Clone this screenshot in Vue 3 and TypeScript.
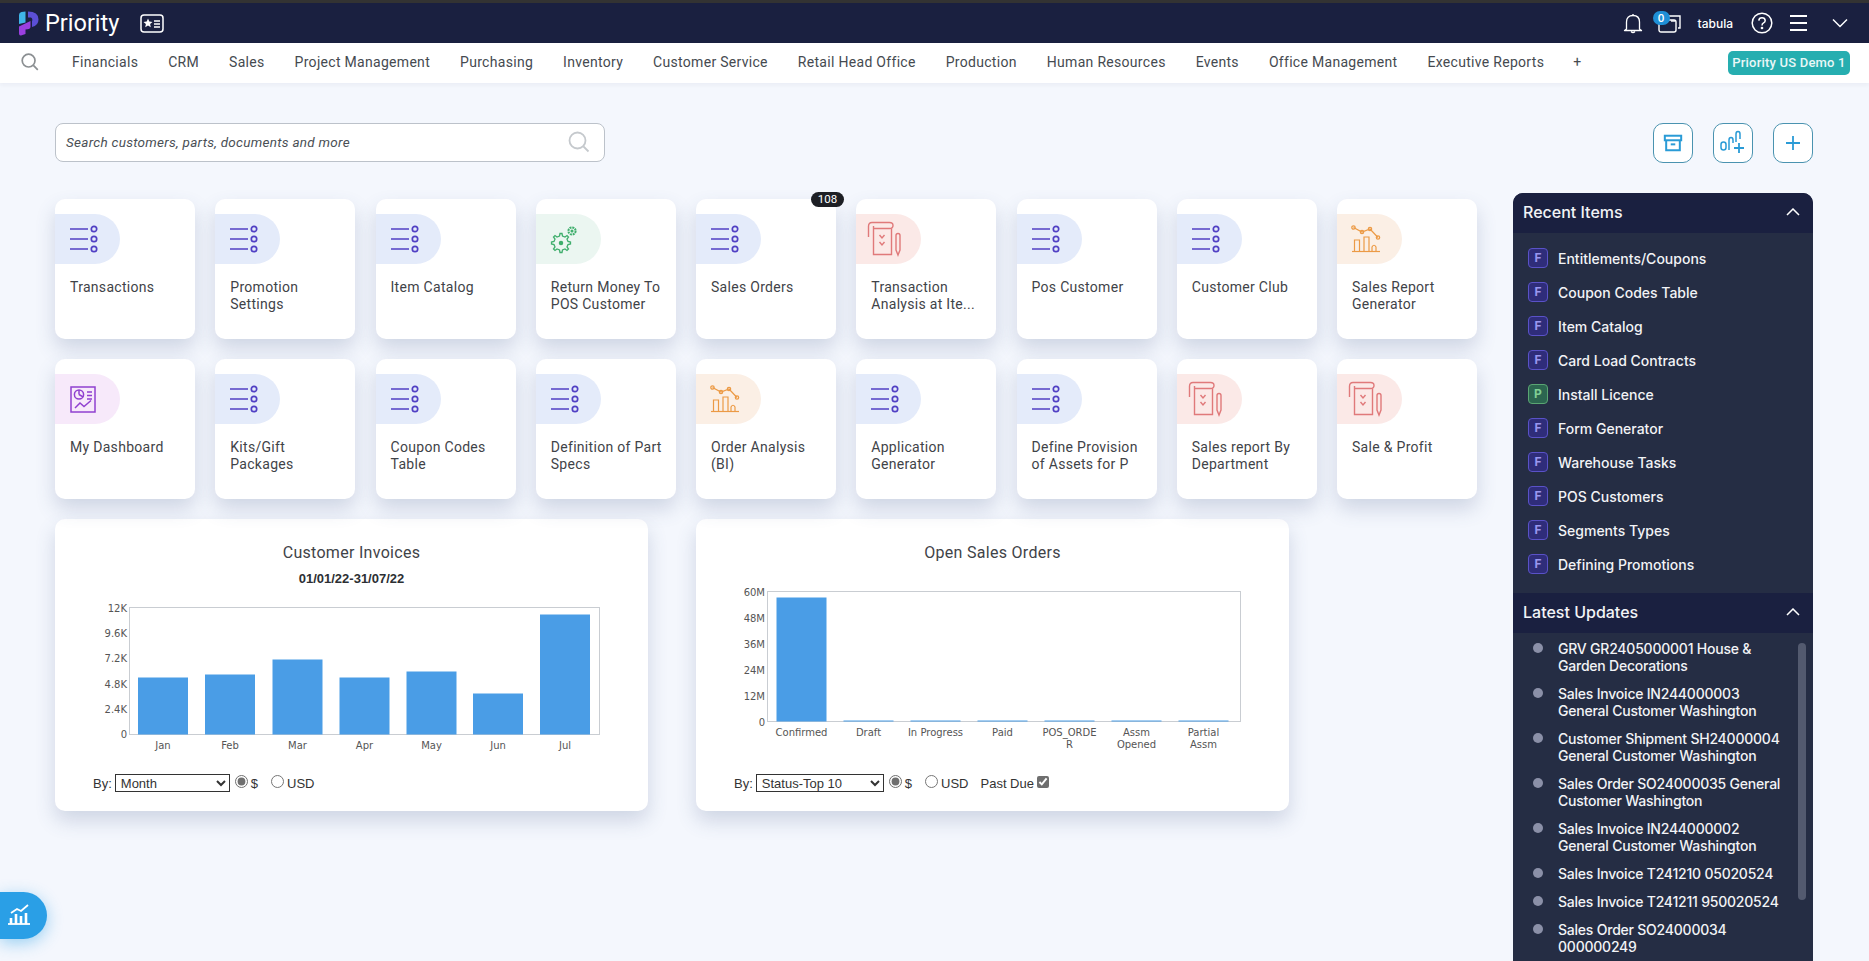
<script setup lang="ts">
type Kind = 'list' | 'gears' | 'report' | 'bars' | 'dash'

interface Tile {
  label: string
  kind: Kind
  badge?: string
}

const tiles: Tile[] = [
  { label: 'Transactions', kind: 'list' },
  { label: 'Promotion Settings', kind: 'list' },
  { label: 'Item Catalog', kind: 'list' },
  { label: 'Return Money To POS Customer', kind: 'gears' },
  { label: 'Sales Orders', kind: 'list', badge: '108' },
  { label: 'Transaction Analysis at Ite...', kind: 'report' },
  { label: 'Pos Customer', kind: 'list' },
  { label: 'Customer Club', kind: 'list' },
  { label: 'Sales Report Generator', kind: 'bars' },
  { label: 'My Dashboard', kind: 'dash' },
  { label: 'Kits/Gift Packages', kind: 'list' },
  { label: 'Coupon Codes Table', kind: 'list' },
  { label: 'Definition of Part Specs', kind: 'list' },
  { label: 'Order Analysis (BI)', kind: 'bars' },
  { label: 'Application Generator', kind: 'list' },
  { label: 'Define Provision of Assets for P', kind: 'list' },
  { label: 'Sales report By Department', kind: 'report' },
  { label: 'Sale & Profit', kind: 'report' },
]

const navItems = [
  'Financials', 'CRM', 'Sales', 'Project Management', 'Purchasing', 'Inventory', 'Customer Service',
  'Retail Head Office', 'Production', 'Human Resources', 'Events', 'Office Management', 'Executive Reports',
]

const recentItems = [
  { tag: 'F', name: 'Entitlements/Coupons' },
  { tag: 'F', name: 'Coupon Codes Table' },
  { tag: 'F', name: 'Item Catalog' },
  { tag: 'F', name: 'Card Load Contracts' },
  { tag: 'P', name: 'Install Licence' },
  { tag: 'F', name: 'Form Generator' },
  { tag: 'F', name: 'Warehouse Tasks' },
  { tag: 'F', name: 'POS Customers' },
  { tag: 'F', name: 'Segments Types' },
  { tag: 'F', name: 'Defining Promotions' },
]

const updates = [
  'GRV GR2405000001 House & Garden Decorations',
  'Sales Invoice IN244000003 General Customer Washington',
  'Customer Shipment SH24000004 General Customer Washington',
  'Sales Order SO24000035 General Customer Washington',
  'Sales Invoice IN244000002 General Customer Washington',
  'Sales Invoice T241210 05020524',
  'Sales Invoice T241211 950020524',
  'Sales Order SO24000034 000000249',
]

// chart 1, plot is 470 x 127
const invoiceBars = [
  { label: 'Jan', x: 8.5, top: 70 },
  { label: 'Feb', x: 75.5, top: 67 },
  { label: 'Mar', x: 143, top: 52 },
  { label: 'Apr', x: 210, top: 70 },
  { label: 'May', x: 277, top: 64 },
  { label: 'Jun', x: 343.5, top: 86 },
  { label: 'Jul', x: 410.5, top: 7 },
]
const invoiceTicks = ['12K', '9.6K', '7.2K', '4.8K', '2.4K', '0']

// chart 2, plot is 473 x 130
const orderBars = [
  { lines: ['Confirmed'], x: 9, top: 6 },
  { lines: ['Draft'], x: 76, top: 129 },
  { lines: ['In Progress'], x: 143, top: 129 },
  { lines: ['Paid'], x: 210, top: 129 },
  { lines: ['POS_ORDE', 'R'], x: 277, top: 129 },
  { lines: ['Assm', 'Opened'], x: 344, top: 129 },
  { lines: ['Partial', 'Assm'], x: 411, top: 129 },
]
const orderTicks = ['60M', '48M', '36M', '24M', '12M', '0']
</script>

<template>
  <div class="page">
    <header class="topbar">
      <div class="brand">
        <svg class="logo" width="21" height="25" viewBox="0 0 21 25">
          <path d="M1 4Q1 1.5 3.5 1L7.5 .5V11.5L1 13Z" fill="#3fb4e8" />
          <path d="M10 .5Q20.5 .5 20.5 8.5Q20.5 14.5 14 16V10.5Q15 7.5 13 6.5L10 6.5Z" fill="#5b4fd6" />
          <path d="M1 15.5L12.5 10V15.5Q12.5 18.2 9.5 18.2L7.5 18.5V23L3 24.5Q1 24.8 1 22.5Z" fill="#9a3fe0" />
        </svg>
        <span class="brand-name">Priority</span>
        <svg class="idcard" width="24" height="19" viewBox="0 0 24 19" fill="none">
          <rect x="1" y="1" width="22" height="17" rx="3" stroke="#fff" stroke-width="1.5" />
          <path d="M8 4.5L9.3 7.6L12.5 7.9L10.1 10L10.8 13.2L8 11.5L5.2 13.2L5.9 10L3.5 7.9L6.7 7.6Z" fill="#fff" />
          <path d="M14 7H20M14 10H20M14 13H20" stroke="#fff" stroke-width="1.4" />
        </svg>
      </div>
      <div class="top-right">
        <svg class="bell" width="20" height="21" viewBox="0 0 20 21" fill="none" stroke="#fff" stroke-width="1.3">
          <path d="M3.5 16V9Q3.5 2.5 10 2.5T16.5 9V16L18.5 17.5H1.5Z" stroke-linejoin="round" />
          <path d="M8 18.5Q10 20.5 12 18.5" />
          <path d="M10 1V2.5" />
        </svg>
        <div class="windows">
          <svg width="24" height="20" viewBox="0 0 24 20" fill="none" stroke="#fff" stroke-width="1.4">
            <rect x="1" y="7" width="17" height="12" rx="2" />
            <path d="M7 3H22V15H20" />
            <path d="M13 8H17" />
          </svg>
          <span class="win-badge">0</span>
        </div>
        <span class="user">tabula</span>
        <svg class="help" width="22" height="22" viewBox="0 0 22 22" fill="none" stroke="#fff" stroke-width="1.5">
          <circle cx="11" cy="11" r="9.8" />
          <path d="M7.8 8.6Q8 5.8 11 5.8T14.2 8.5Q14.2 10 12.6 10.9T11 13.4" />
          <circle cx="11" cy="16" r=".6" fill="#fff" />
        </svg>
        <div class="burger"><i></i><i></i><i></i></div>
        <svg class="top-chev" width="16" height="10" viewBox="0 0 16 10" fill="none" stroke="#fff" stroke-width="1.5">
          <path d="M1 1.5L8 8.5L15 1.5" />
        </svg>
      </div>
    </header>

    <nav class="navbar">
      <svg class="nav-search" width="18" height="18" viewBox="0 0 18 18" fill="none" stroke="#8b8f92" stroke-width="1.7">
        <circle cx="7.6" cy="7.6" r="6.4" />
        <path d="M12.4 12.4L16.8 16.8" />
      </svg>
      <ul class="nav-list">
        <li v-for="item in navItems" :key="item">{{ item }}</li>
        <li class="nav-plus">+</li>
      </ul>
      <span class="company">Priority US Demo 1</span>
    </nav>

    <div class="content">
      <main class="main">
        <div class="search-row">
          <div class="search-box">
            <span>Search customers, parts, documents and more</span>
            <svg width="22" height="22" viewBox="0 0 22 22" fill="none" stroke="#c5c9cd" stroke-width="1.8">
              <circle cx="9.5" cy="9.5" r="8" />
              <path d="M15.5 15.5L20.5 20.5" />
            </svg>
          </div>
          <div class="actions">
            <button class="act-btn">
              <svg width="20" height="20" viewBox="0 0 22 22" fill="none" stroke="#2a9bd6" stroke-width="2.2">
                <rect x="2" y="3" width="18" height="5" />
                <path d="M3.5 8V19H18.5V8" />
                <path d="M8.5 12.5H13.5" />
              </svg>
            </button>
            <button class="act-btn">
              <svg width="28" height="28" viewBox="0 0 28 28" fill="none" stroke="#2a9bd6" stroke-width="1.5">
                <rect x="2" y="13" width="5" height="8" rx="2.5" />
                <path d="M10 21V11Q10 8.5 12 8.5T14 11V14" />
                <path d="M17 13V5Q17 2.5 19 2.5T21 5V10" />
                <path d="M20 14V24M15 19H25" stroke-width="1.8" />
              </svg>
            </button>
            <button class="act-btn">
              <svg width="18" height="18" viewBox="0 0 18 18" fill="none" stroke="#2a9bd6" stroke-width="1.8">
                <path d="M9 2V16M2 9H16" />
              </svg>
            </button>
          </div>
        </div>

        <div class="tiles">
          <div v-for="tile in tiles" :key="tile.label" class="tile">
            <span v-if="tile.badge" class="tile-badge">{{ tile.badge }}</span>
            <div class="pill" :class="'pill-' + tile.kind">
              <svg v-if="tile.kind === 'list'" width="30" height="28" viewBox="0 0 30 28" fill="none" stroke="#5140c4" stroke-width="1.7">
                <path d="M1 4H19M1 14H19M1 24H19" />
                <circle cx="25" cy="4" r="2.7" />
                <circle cx="25" cy="14" r="2.7" />
                <circle cx="25" cy="24" r="2.7" />
              </svg>
              <svg v-else-if="tile.kind === 'gears'" width="28" height="34" viewBox="0 0 28 34" fill="none" stroke="#3fae6c" stroke-width="1.3">
                <g transform="translate(-1 1.5)">
                  <path d="M11 10L13 10L13.5 12.5L16 13.5L18 12L19.5 13.5L18 15.5L19 18L21.5 18.5V20.5L19 21L18 23.5L19.5 25.5L18 27L16 25.5L13.5 26.5L13 29H11L10.5 26.5L8 25.5L6 27L4.5 25.5L6 23.5L5 21L2.5 20.5V18.5L5 18L6 15.5L4.5 13.5L6 12L8 13.5L10.5 12.5Z" />
                  <circle cx="12" cy="19.5" r="1.6" fill="#3fae6c" />
                </g>
                <circle cx="22" cy="9" r="3.6" stroke-dasharray="2 .8" stroke-width="2" />
                <circle cx="22" cy="9" r=".9" fill="#3fae6c" />
              </svg>
              <svg v-else-if="tile.kind === 'report'" width="35" height="36" viewBox="0 0 35 36" fill="none" stroke="#e0797a" stroke-width="1.4">
                <path d="M1.5 16V5.5Q1.5 1.5 5 1.5H22.5Q26 1.5 26 4.5T22.5 7.5H7" />
                <path d="M6.5 5V33.5H24.5V7.5" />
                <path d="M12.5 14L15 17L17.5 14M12.5 21L15 24L17.5 21" />
                <path d="M29 14.5Q29 12.5 31 12.5T33 14.5V29L31 34L29 29Z" />
              </svg>
              <svg v-else-if="tile.kind === 'bars'" width="30" height="28" viewBox="0 0 30 28" fill="none" stroke="#ec9a45" stroke-width="1.2">
                <path d="M1 26.5H29" />
                <path d="M3.5 26.5V15H8.5V26.5M13 26.5V12H18V26.5M21 26.5V22Q23 18.5 25 22V26.5" />
                <path d="M2.5 2.5L11 7L19 4L27 12.5" />
                <circle cx="2.5" cy="2.5" r="1.7" />
                <circle cx="11" cy="7" r="1.7" />
                <circle cx="19" cy="4" r="1.7" />
                <circle cx="27" cy="12.5" r="1.7" />
              </svg>
              <svg v-else width="26" height="27" viewBox="0 0 26 27" fill="none" stroke="#9040d0" stroke-width="1.5">
                <rect x="1" y="1" width="24" height="25" />
                <circle cx="9" cy="8.5" r="4.6" />
                <path d="M9 8.5V3.9M9 8.5L13 10.8" />
                <path d="M17 6H22M17 9.5H22M17 13H22" />
                <path d="M5 22L10 17L14 20.5L21 14.5" />
              </svg>
            </div>
            <p class="tile-label">{{ tile.label }}</p>
          </div>
        </div>

        <div class="charts">
          <section class="chart-card">
            <h3 class="chart-title">Customer Invoices</h3>
            <div class="chart-date">01/01/22-31/07/22</div>
            <svg class="plot plot-a" width="540" height="175" viewBox="0 0 540 175">
              <g class="ticks" text-anchor="end">
                <text v-for="(t, i) in invoiceTicks" :key="t" x="58" :y="13 + i * 25.2">{{ t }}</text>
              </g>
              <g transform="translate(60.5 8.5)">
                <rect width="470" height="127" fill="none" stroke="#c9cdd2" />
                <rect v-for="b in invoiceBars" :key="b.label" :x="b.x" :y="b.top" width="50" :height="127 - b.top" fill="#4a9de6" />
                <text v-for="b in invoiceBars" :key="b.label + 'x'" class="x-label" :x="b.x + 25" y="141" text-anchor="middle">{{ b.label }}</text>
              </g>
            </svg>
            <div class="controls">
              <span>By:</span>
              <select class="by-select sel-a"><option>Month</option></select>
              <input type="radio" name="cur-a" checked />
              <span class="cur">$</span>
              <input type="radio" name="cur-a" class="radio-usd" />
              <span>USD</span>
            </div>
          </section>

          <section class="chart-card">
            <h3 class="chart-title">Open Sales Orders</h3>
            <svg class="plot plot-b" width="540" height="191" viewBox="0 0 540 191">
              <g class="ticks" text-anchor="end">
                <text v-for="(t, i) in orderTicks" :key="t" x="58" :y="13 + i * 25.9">{{ t }}</text>
              </g>
              <g transform="translate(60.5 8.5)">
                <rect width="473" height="130" fill="none" stroke="#c9cdd2" />
                <rect v-for="b in orderBars" :key="b.x" :x="b.x" :y="b.top" width="50" :height="130 - b.top" fill="#4a9de6" />
                <text v-for="b in orderBars" :key="b.x + 'x'" class="x-label" text-anchor="middle">
                  <tspan v-for="(line, i) in b.lines" :key="line" :x="b.x + 25" :y="144 + i * 12">{{ line }}</tspan>
                </text>
              </g>
            </svg>
            <div class="controls">
              <span>By:</span>
              <select class="by-select sel-b"><option>Status-Top 10</option></select>
              <input type="radio" name="cur-b" checked />
              <span class="cur">$</span>
              <input type="radio" name="cur-b" class="radio-usd" />
              <span>USD</span>
              <span class="past-due">Past Due</span>
              <input type="checkbox" checked />
            </div>
          </section>
        </div>
      </main>

      <aside class="sidebar">
        <div class="side-head">
          <span>Recent Items</span>
          <svg width="14" height="8" viewBox="0 0 14 8" fill="none" stroke="#fff" stroke-width="1.5"><path d="M1 7L7 1L13 7" /></svg>
        </div>
        <ul class="recent">
          <li v-for="r in recentItems" :key="r.name">
            <span class="tag" :class="{ 'tag-p': r.tag === 'P' }">{{ r.tag }}</span>
            {{ r.name }}
          </li>
        </ul>
        <div class="side-head">
          <span>Latest Updates</span>
          <svg width="14" height="8" viewBox="0 0 14 8" fill="none" stroke="#fff" stroke-width="1.5"><path d="M1 7L7 1L13 7" /></svg>
        </div>
        <div class="updates-wrap">
          <ul class="updates">
            <li v-for="u in updates" :key="u">
              <span class="dot"></span>
              <span class="upd-text">{{ u }}</span>
            </li>
          </ul>
          <div class="scrollbar"></div>
        </div>
      </aside>
    </div>

    <button class="float-btn">
      <svg width="22" height="21" viewBox="0 0 22 21" fill="none" stroke="#fff" stroke-width="1.8">
        <path d="M0 20H22" />
        <path d="M3 20V14M8 20V10M13 20V12M18 20V9" stroke-width="2.6" />
        <path d="M3 9L9 5L13 7L20 1" />
      </svg>
    </button>
  </div>
</template>

<style>
html,
body {
  margin: 0;
  height: 100%;
  overflow: hidden;
}
</style>

<style scoped>
.page {
  height: 961px;
  background: #f4f7fd;
  font-family: Roboto, "Liberation Sans", sans-serif;
  position: relative;
  overflow: hidden;
  border-top: 3px solid #333;
  box-sizing: border-box;
}

/* top bar */
.topbar {
  height: 40px;
  background: #1a2040;
  display: flex;
  align-items: center;
  justify-content: space-between;
  color: #fff;
}
.brand {
  display: flex;
  align-items: center;
  padding-left: 18px;
}
.brand-name {
  font-size: 23.5px;
  font-weight: 400;
  margin-left: 6px;
}
.idcard {
  margin-left: 21px;
}
.top-right {
  display: flex;
  align-items: center;
  padding-right: 21px;
}
.windows {
  position: relative;
  margin-left: 15px;
  height: 20px;
  width: 24px;
}
.win-badge {
  position: absolute;
  left: -5px;
  top: -2px;
  width: 17px;
  height: 14px;
  border-radius: 7px;
  background: #1f8fd6;
  font: 600 10px Inter, sans-serif;
  line-height: 14px;
  text-align: center;
}
.user {
  margin-left: 16px;
  font: 500 12px Inter, sans-serif;
}
.help {
  margin-left: 18px;
}
.burger {
  margin-left: 17px;
  display: flex;
  flex-direction: column;
  gap: 5px;
  width: 17px;
}
.burger i {
  height: 2px;
  background: #fff;
}
.top-chev {
  margin-left: 25px;
}

/* module nav */
.navbar {
  height: 40px;
  background: #fff;
  display: flex;
  align-items: center;
  padding: 0 0 2px 21px;
  box-sizing: border-box;
  box-shadow: 0 2px 4px rgba(30, 40, 80, .05);
  position: relative;
}
.nav-list {
  list-style: none;
  display: flex;
  margin: 0 0 0 33px;
  padding: 0;
  gap: 30px;
  font-size: 14px;
  letter-spacing: .3px;
  color: #454a50;
}
.nav-plus {
  margin-left: -1px;
}
.company {
  position: absolute;
  left: 1728px;
  top: 8px;
  width: 122px;
  height: 24px;
  line-height: 24px;
  background: #26aeb0;
  border-radius: 5px;
  color: #e9f7f7;
  font-size: 13px;
  font-weight: 500;
  text-align: center;
  letter-spacing: .2px;
}

.content {
  display: flex;
  height: 878px;
}
.main {
  width: 1513px;
  flex-shrink: 0;
  box-sizing: border-box;
  padding: 40px 0 0 55px;
}

/* search + actions */
.search-row {
  display: flex;
  justify-content: space-between;
  height: 40px;
  width: 1758px;
}
.search-box {
  width: 550px;
  height: 39px;
  box-sizing: border-box;
  background: #fff;
  border: 1px solid #bcc2ca;
  border-radius: 8px;
  display: flex;
  align-items: center;
  justify-content: space-between;
  padding: 0 14px 1px 10px;
  font-size: 13.5px;
  font-style: italic;
  color: #4a4f55;
  letter-spacing: .28px;
}
.actions {
  display: flex;
  gap: 20px;
}
.act-btn {
  width: 40px;
  height: 40px;
  padding: 0;
  display: flex;
  align-items: center;
  justify-content: center;
  background: #fff;
  border: 1px solid #4a93b0;
  border-radius: 10px;
}

/* tiles */
.tiles {
  display: grid;
  grid-template-columns: repeat(9, 140px);
  column-gap: 20.25px;
  row-gap: 20px;
  margin-top: 36px;
}
.tile {
  position: relative;
  height: 140px;
  background: #fff;
  border-radius: 10px;
  box-shadow: 0 10px 20px rgba(60, 80, 130, .2);
}
.tile-badge {
  position: absolute;
  left: 115px;
  top: -7px;
  width: 33px;
  height: 15px;
  border-radius: 8px;
  background: #1d1f24;
  color: #fff;
  font-size: 11.5px;
  line-height: 15px;
  text-align: center;
}
.pill {
  position: absolute;
  left: 0;
  top: 15px;
  width: 65px;
  height: 50px;
  border-radius: 0 25px 25px 0;
  display: flex;
  align-items: center;
  padding-left: 14px;
  box-sizing: border-box;
}
.pill-list {
  background: #e4ebfa;
}
.pill-gears {
  background: #ebf6f1;
}
.pill-report {
  background: #fbe9e7;
  padding-left: 11px;
}
.pill-bars {
  background: #fbefe5;
}
.pill-dash {
  background: #f7e9fa;
  padding-left: 15px;
}
.tile-label {
  margin: 0;
  position: absolute;
  left: 15px;
  top: 80px;
  width: 118px;
  font-size: 14px;
  line-height: 17px;
  letter-spacing: .3px;
  color: #3f4348;
}

/* charts */
.charts {
  display: flex;
  gap: 48px;
  margin-top: 20px;
}
.chart-card {
  width: 593px;
  height: 292px;
  background: #fff;
  border-radius: 10px;
  box-shadow: 0 10px 20px rgba(60, 80, 130, .2);
  box-sizing: border-box;
  padding-top: 24px;
}
.chart-title {
  margin: 0;
  text-align: center;
  font-size: 16px;
  font-weight: 400;
  line-height: 20px;
  letter-spacing: .3px;
  color: #3f4348;
}
.chart-date {
  margin-top: 8px;
  height: 15px;
  text-align: center;
  font: 700 13px/15px "Liberation Sans", sans-serif;
  color: #2c2f33;
}
.plot {
  display: block;
}
.plot-a {
  margin: 13px 0 0 14px;
}
.plot-b {
  margin: 20px 0 0 11px;
}
.ticks {
  font: 10px "DejaVu Sans", sans-serif;
  fill: #555;
}
.x-label {
  font: 10px "DejaVu Sans", sans-serif;
  fill: #555;
}
.controls {
  display: flex;
  align-items: center;
  font: 13px "Liberation Sans", sans-serif;
  color: #333;
  padding-left: 38px;
  height: 18px;
}
.by-select {
  margin-left: 3px;
  height: 18px;
  padding: 0 0 0 1px;
  font: 13px "Liberation Sans", sans-serif;
  border: 1px solid #333;
  background: #fff;
  color: #333;
}
.sel-a {
  width: 115px;
}
.sel-b {
  width: 128px;
}
.controls input {
  accent-color: #6f6f6f;
}
.controls input[type="radio"] {
  margin: 0 0 3px 5px;
  width: 13px;
  height: 13px;
}
.cur {
  margin-left: 3px;
}
.controls input.radio-usd {
  margin-left: 13px;
}
.radio-usd + span {
  margin-left: 3px;
}
.past-due {
  margin-left: 12px;
}
.controls input[type="checkbox"] {
  margin: 0 0 3px 3px;
  width: 12px;
  height: 12px;
}

/* sidebar */
.sidebar {
  width: 300px;
  margin-top: 110px;
  background: #252d44;
  border-radius: 10px 10px 0 0;
  color: #f2f3f6;
  font-family: Inter, sans-serif;
  font-size: 14px;
  overflow: hidden;
}
.side-head {
  height: 40px;
  background: #1a2040;
  display: flex;
  align-items: center;
  justify-content: space-between;
  padding: 0 13px 2px 10px;
  box-sizing: border-box;
  font-size: 16px;
  font-weight: 500;
}
.recent {
  list-style: none;
  margin: 0;
  padding: 8px 0 12px 15px;
}
.recent li {
  height: 34px;
  display: flex;
  align-items: center;
  font-weight: 500;
}
.tag {
  width: 20px;
  height: 20px;
  margin-right: 10px;
  box-sizing: border-box;
  border: 1px solid #5a52c8;
  border-radius: 4px;
  background: #2f2d7a;
  color: #9a97f0;
  font-size: 12px;
  font-weight: 700;
  line-height: 18px;
  text-align: center;
}
.tag-p {
  border-color: #5aa573;
  background: #2c6650;
  color: #7fcf94;
}
.updates-wrap {
  position: relative;
}
.updates {
  list-style: none;
  margin: 0;
  padding: 7px 0 0 20px;
}
.updates li {
  display: flex;
  margin-bottom: 11px;
  font-weight: 500;
  line-height: 17px;
  letter-spacing: -.22px;
}
.dot {
  width: 10px;
  height: 10px;
  flex-shrink: 0;
  margin: 3px 15px 0 0;
  border-radius: 50%;
  background: #8b90a8;
}
.upd-text {
  width: 232px;
}
.scrollbar {
  position: absolute;
  left: 285px;
  top: 10px;
  width: 8px;
  height: 257px;
  border-radius: 4px;
  background: #535a6f;
}

.float-btn {
  position: absolute;
  left: 0;
  top: 889px;
  width: 47px;
  height: 47px;
  border: none;
  padding: 0 0 3px 8px;
  display: flex;
  align-items: center;
  background: #2a9fe6;
  border-radius: 0 24px 24px 0;
  box-shadow: 0 4px 16px rgba(42, 159, 230, .45);
}
</style>
